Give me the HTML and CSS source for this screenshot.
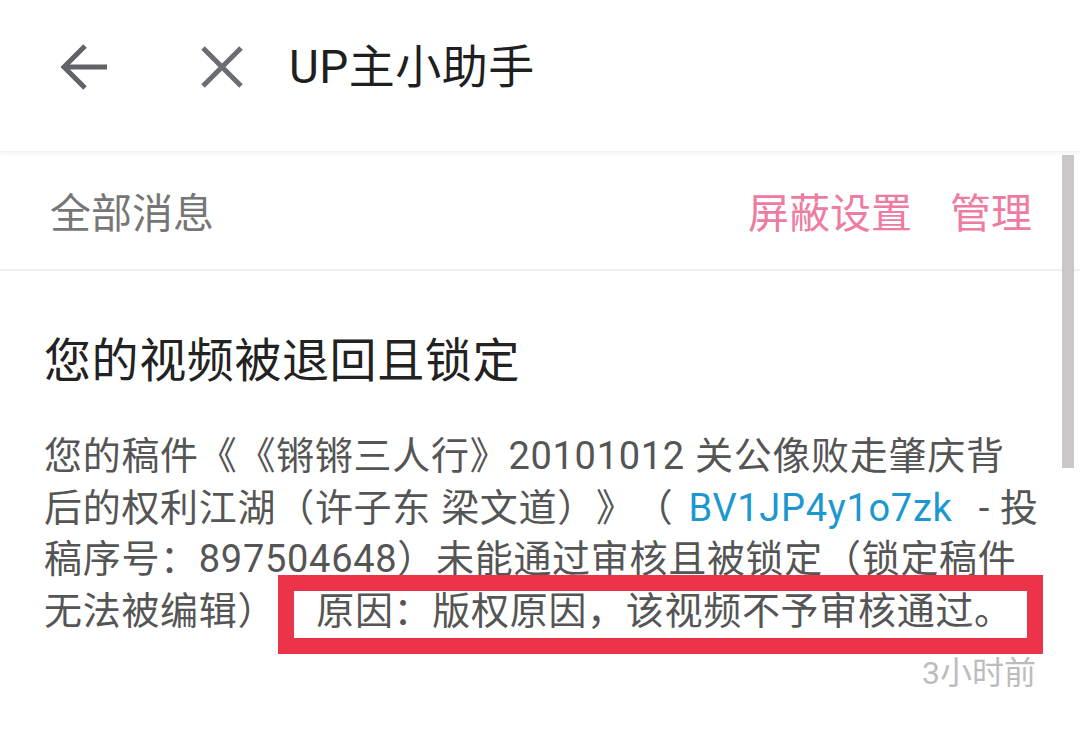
FILE: index.html
```html
<!DOCTYPE html>
<html lang="zh-CN">
<head>
  <meta charset="UTF-8" />
  <meta name="viewport" content="width=device-width, initial-scale=1.0"/>
  <title>UP主小助手</title>
  <link rel="stylesheet" href="styles.css">
</head>
<body>

  <!-- Top bar -->
  <div class="topbar">
    <a class="icon-btn back" href="#">
      <svg width="48" height="46" viewBox="0 0 48 46">
        <path d="M47 23H5" stroke="#606368" stroke-width="5" fill="none"/>
        <path d="M25 2L4 23l21 21" stroke="#606368" stroke-width="5" fill="none"/>
      </svg>
    </a>
    <a class="icon-btn close" href="#">
      <svg width="42" height="42" viewBox="0 0 42 42">
        <path d="M2 2l38 38M40 2L2 40" stroke="#6a6d72" stroke-width="5" fill="none"/>
      </svg>
    </a>
    <h1 class="page-title">UP主小助手</h1>
  </div>

  <!-- Filter bar -->
  <div class="filterbar">
    <span class="filter-label">全部消息</span>
    <div class="filter-actions">
      <a href="#">屏蔽设置</a>
      <a href="#">管理</a>
    </div>
  </div>

  <!-- Message -->
  <div class="message">
    <h2 class="message-title">您的视频被退回且锁定</h2>
    <p class="message-body">您的稿件《《锵锵三人行》20101012 关公像败走肇庆背后的权利江湖（许子东 梁文道）》（ <a class="bvid" href="#">BV1JP4y1o7zk</a>&nbsp; - 投稿序号：897504648）未能通过审核且被锁定（锁定稿件无法被编辑）<span class="reason">原因：版权原因，该视频不予审核通过。</span></p>
    <div class="message-time">3小时前</div>
    <div class="mark"></div>
  </div>

  <div class="scrollbar"></div>

</body>
</html>
```

FILE: styles.css
```css
* {
  box-sizing: border-box;
}

body {
  margin: 0;
  font-family: Roboto, 'Noto Sans CJK SC', sans-serif;
  background-color: #fff;
  color: #333;
  position: relative;
  overflow: hidden;
  height: 743px;
  text-spacing-trim: space-all;
}

a {
  text-decoration: none;
}

/* Top bar */
.topbar {
  height: 151px;
  display: flex;
  align-items: flex-start;
  padding: 44px 0 0 60px;
  background-color: #fff;
  box-shadow: 0 2px 4px rgba(0, 0, 0, 0.07);
  position: relative;
  z-index: 2;
}

.icon-btn {
  display: flex;
  align-items: center;
  height: 46px;
}

.icon-btn.close {
  margin-left: 93px;
}

.page-title {
  margin: -8px 0 0 46px;
  font-size: 46px;
  line-height: 62px;
  font-weight: 400;
  color: #1f1f1f;
  letter-spacing: 0.5px;
}

/* Filter bar */
.filterbar {
  height: 120px;
  display: flex;
  justify-content: space-between;
  align-items: center;
  padding: 0 48px 0 50px;
  border-bottom: 2px solid #f0f0f0;
  background-color: #fff;
  font-size: 41px;
}

.filter-label {
  color: #767676;
}

.filter-actions {
  display: flex;
  gap: 38px;
}

.filter-actions a {
  color: #ee7ba0;
}

/* Message */
.message {
  position: relative;
  padding: 60px 40px 0 44px;
}

.message-title {
  margin: 0;
  font-size: 47px;
  line-height: 60px;
  font-weight: 400;
  color: #222;
  letter-spacing: 0.6px;
}

.message-body {
  margin: 40px 0 0;
  font-size: 38px;
  line-height: 51.5px;
  letter-spacing: 0.7px;
  color: #555;
}

.bvid {
  color: #1c98cf;
  margin: 0 6px 0 5px;
}

.reason {
  margin-left: 40px;
}

.message-time {
  margin-top: 16px;
  text-align: right;
  padding-right: 4px;
  font-size: 32px;
  line-height: 40px;
  color: #bcbcbc;
}

/* red annotation box */
.mark {
  position: absolute;
  left: 278px;
  top: 304px;
  width: 765px;
  height: 79px;
  border: 16px solid #ec3349;
}

.scrollbar {
  position: absolute;
  top: 155px;
  right: 6px;
  width: 12px;
  height: 313px;
  background-color: #cbc6ca;
}
```
